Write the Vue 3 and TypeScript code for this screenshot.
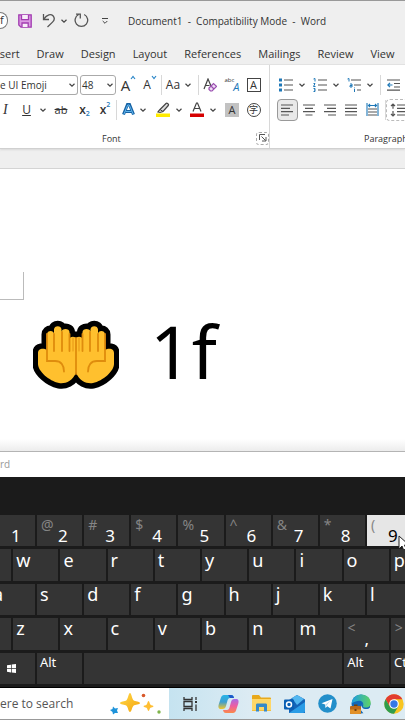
<script setup lang="ts">
interface Key {
  main: string
  alt?: string
  kind?: 'digit' | 'letter' | 'word' | 'win' | 'space'
  active?: boolean
}

const tabs: string[] = ['nsert', 'Draw', 'Design', 'Layout', 'References', 'Mailings', 'Review', 'View']

const symbols = ['', '@', '#', '$', '%', '^', '&', '*', '(']
const letters = (text: string): Key[] => text.split('').map((main) => ({ main, kind: 'letter' }))

const rows: { name: string; keys: Key[] }[] = [
  {
    name: 'inner',
    keys: symbols.map((alt, i) => ({ main: String(i + 1), alt, kind: 'digit', active: i === 8 })),
  },
  { name: 'outer', keys: letters(' wertyuiop') },
  { name: 'inner', keys: letters('asdfghjkl') },
  {
    name: 'outer',
    keys: [...letters(' zxcvbnm'), { main: ',', alt: '<', kind: 'digit' }, { main: '', alt: '>', kind: 'digit' }],
  },
  {
    name: 'bottom',
    keys: [
      { main: '', kind: 'win' },
      { main: 'Alt', kind: 'word' },
      { main: '', kind: 'space' },
      { main: 'Alt', kind: 'word' },
      { main: 'Ctrl', kind: 'word' },
    ],
  },
]
</script>

<template>
  <div class="page">
    <svg class="defs" aria-hidden="true">
      <symbol id="caret" viewBox="0 0 8 8"><path d="M1.5 2.8 4 5.2 6.5 2.8" fill="none" stroke="#444" stroke-width="1.2" /></symbol>
    </svg>

    <header class="titlebar">
      <span class="pill">f</span>
      <button class="icon save" aria-label="Save">
        <svg width="14" height="14" viewBox="0 0 14 14" fill="none" stroke="#a13bb0" stroke-width="1.3">
          <path d="M.8.8h12.4v12.4H3L.8 11z" fill="#dc9be3" /><path d="M3.5 1v4.6h7V1M4 13V9h6.2v4" fill="#f8edf9" />
        </svg>
      </button>
      <button class="icon undo" aria-label="Undo">
        <svg width="14" height="15" viewBox="0 0 14 15" fill="none" stroke="#555" stroke-width="1.3">
          <path d="M1.5 1v5.5H7M1.8 6.2C5 1 9 .7 11 2.8c2 2.200 1.300 4.500-.5 6.300L5.500 14" />
        </svg>
      </button>
      <svg class="small" width="8" height="8"><use href="#caret" /></svg>
      <button class="icon redo" aria-label="Redo">
        <svg width="15" height="15" viewBox="0 0 15 15" fill="none" stroke="#555" stroke-width="1.3">
          <path d="M10.200 1.500A6.300 6.300 0 1 1 4.600 1.500M2 1.200h4.300v4.300" />
        </svg>
      </button>
      <button class="icon more" aria-label="Customize toolbar">
        <svg width="8" height="8" viewBox="0 0 8 8" fill="none" stroke="#444" stroke-width="1"><path d="M1 1.500h6M1.700 4 4 6.300 6.300 4" /></svg>
      </button>
      <h1>Document1&nbsp; -&nbsp; Compatibility Mode&nbsp; -&nbsp; Word</h1>
    </header>

    <nav class="tabs">
      <a v-for="tab in tabs" :key="tab" href="#">{{ tab }}</a>
    </nav>

    <section class="ribbon">
      <div class="group font-group">
        <div class="tools row-a">
          <button class="combo family">e UI Emoji<svg width="8" height="8"><use href="#caret" /></svg></button>
          <button class="combo size">48<svg width="8" height="8"><use href="#caret" /></svg></button>
          <button class="tool glyph grow" aria-label="Grow font">A<svg width="6" height="5" viewBox="0 0 6 5"><path d="M1 4 3 1.500 5 4" fill="none" stroke="#2a86c8" stroke-width="1.200" /></svg></button>
          <button class="tool glyph shrink" aria-label="Shrink font">A<svg width="6" height="5" viewBox="0 0 6 5"><path d="M1 1 3 3.500 5 1" fill="none" stroke="#2a86c8" stroke-width="1.200" /></svg></button>
          <i class="rule"></i>
          <button class="tool glyph shrink">Aa</button>
          <svg width="8" height="8"><use href="#caret" /></svg>
          <i class="rule"></i>
          <button class="tool" aria-label="Clear formatting">
            <svg width="14" height="14" viewBox="0 0 14 14" fill="none" stroke="#444" stroke-width="1.200">
              <path d="M1 11 5 1l3 7M2.500 7.500h4" />
              <path d="m6 10 4.500-4.500 3 2.800L9 13H7.500L6 11.500zM8 8l3 3" fill="#f0dcf5" stroke="#9a4fb0" />
            </svg>
          </button>
          <button class="tool abc" aria-label="Phonetic guide"><small>abc</small><em>A</em></button>
          <button class="tool" aria-label="Character border"><span class="boxed">A</span></button>
        </div>
        <div class="tools row-b">
          <button class="tool italic">I</button>
          <button class="tool underline">U</button>
          <svg width="8" height="8"><use href="#caret" /></svg>
          <button class="tool strike">ab</button>
          <button class="tool script">x<sub>2</sub></button>
          <button class="tool script">x<sup>2</sup></button>
          <i class="rule"></i>
          <button class="tool" aria-label="Text effects">
            <svg width="13" height="13" viewBox="0 0 13 13"><path d="M1.500 11.500 5.500 1.500h2l4 10M3.500 8.500h6" fill="none" stroke="#1763a5" stroke-width="3" /><path d="M1.800 11.500 5.700 2h1.600l4 9.500M3.500 8.500h6" fill="none" stroke="#62b5ec" stroke-width="1" /></svg>
          </button>
          <svg width="8" height="8"><use href="#caret" /></svg>
          <button class="tool" aria-label="Highlight">
            <svg width="14" height="15" viewBox="0 0 14 15"><path d="M0 11.500h14V15H0z" fill="#ffeb00" /><path d="m4 7.500 6-6c1-1 3.200.8 2.300 2L7 9.500 4 10.500 2 10z" fill="#ddd" stroke="#444" stroke-width="1.200" /><path d="m4 7.500 3 2" stroke="#444" /></svg>
          </button>
          <svg width="8" height="8"><use href="#caret" /></svg>
          <button class="tool" aria-label="Font color">
            <svg width="14" height="15" viewBox="0 0 14 15"><path d="M0 11.500h14V15H0z" fill="#d60000" /><path d="M3 9.500 6.500 1h1L11 9.500M4.300 6.500h5.400" fill="none" stroke="#444" stroke-width="1.200" /></svg>
          </button>
          <svg width="8" height="8"><use href="#caret" /></svg>
          <button class="tool" aria-label="Character shading"><span class="shaded">A</span></button>
          <button class="tool" aria-label="Enclose characters"><span class="circled">字</span></button>
        </div>
        <div class="caption">
          <span>Font</span>
          <button class="launcher" aria-label="Font settings">
            <svg width="8" height="8" viewBox="0 0 8 8" fill="none" stroke="#555"><path d="M.500 6V.500H6M2.500 2.500l4 4M7 3v4H3" /></svg>
          </button>
        </div>
      </div>

      <div class="group para-group">
        <div class="tools row-c">
          <button class="tool" aria-label="Bullets">
            <svg width="14" height="14" viewBox="0 0 14 14"><path d="M0 .500h3v3H0zM0 5.500h3v3H0zM0 10.500h3v3H0z" fill="#1e78b8" /><path d="M5 2h9M5 7h9M5 12h9" stroke="#555" stroke-width="1.200" /></svg>
          </button>
          <svg width="8" height="8"><use href="#caret" /></svg>
          <button class="tool" aria-label="Numbering">
            <svg width="14" height="14" viewBox="0 0 14 14"><path d="M.500 1 2 .500v3M.500 5.500H2L.500 8.500h2M.500 10.500H2v3H.500M1 12h1" fill="none" stroke="#1e78b8" /><path d="M5 2h9M5 7h9M5 12h9" stroke="#555" stroke-width="1.200" /></svg>
          </button>
          <svg width="8" height="8"><use href="#caret" /></svg>
          <button class="tool" aria-label="Multilevel list">
            <svg width="14" height="14" viewBox="0 0 14 14"><path d="M.500 1 2 .500v3M3 6h2v3H3V7.500h2M7.500 11v3M7.500 9.500v.800" fill="none" stroke="#1e78b8" /><path d="M4 2h10M7 7h7M10 12h4" stroke="#555" stroke-width="1.200" /></svg>
          </button>
          <svg width="8" height="8"><use href="#caret" /></svg>
          <i class="rule"></i>
          <button class="tool" aria-label="Decrease indent">
            <svg width="13" height="12" viewBox="0 0 13 12"><path d="M0 1h13M7 4.500h6M7 8h6M0 11.200h13" stroke="#555" stroke-width="1.200" /><path d="M5.500 6H.800M3 3.800.800 6 3 8.200" fill="none" stroke="#1e78b8" stroke-width="1.200" /></svg>
          </button>
        </div>
        <div class="tools row-d">
          <button class="tool pressed" aria-label="Align left">
            <svg width="12" height="12" viewBox="0 0 12 12"><path d="M0 1h12M0 4.300h9M0 7.700h12M0 11h8" stroke="#555" stroke-width="1.200" /></svg>
          </button>
          <button class="tool" aria-label="Center">
            <svg width="12" height="12" viewBox="0 0 12 12"><path d="M0 1h12M2 4.300h8M0 7.700h12M2.500 11h7" stroke="#555" stroke-width="1.200" /></svg>
          </button>
          <button class="tool" aria-label="Align right">
            <svg width="12" height="12" viewBox="0 0 12 12"><path d="M0 1h12M3 4.300h9M0 7.700h12M4 11h8" stroke="#555" stroke-width="1.200" /></svg>
          </button>
          <button class="tool" aria-label="Justify">
            <svg width="12" height="12" viewBox="0 0 12 12"><path d="M0 1h12M0 4.300h12M0 7.700h12M0 11h12" stroke="#555" stroke-width="1.200" /></svg>
          </button>
          <button class="tool" aria-label="Distribute">
            <svg width="13" height="13" viewBox="0 0 13 13"><path d="M1 0v13M12 0v13M2.500 2.500h8M4 1 2.500 2.500 4 4M9 1l1.500 1.500L9 4" fill="none" stroke="#1e78b8" stroke-width="1.100" /><path d="M2 6h9M2 9h9M2 12h9" stroke="#555" stroke-width="1.200" /></svg>
          </button>
          <i class="rule"></i>
          <button class="tool dashed" aria-label="Line spacing">
            <svg width="15" height="14" viewBox="0 0 15 14" fill="none" stroke="#555" stroke-width="1.200"><path d="M3 .800v5M1 3l2-2 2 2M3 8v5M1 11l2 2 2-2M7 2h8M7 5.300h8M7 8.700h8M7 12h8" /></svg>
          </button>
        </div>
        <div class="caption"><span>Paragraph</span></div>
      </div>
    </section>

    <main class="desk">
      <article class="sheet">
        <div class="corner"></div>
        <p class="line">
          <svg width="86" height="70" viewBox="0 0 86 70" role="img" aria-label="Palms up together">
            <defs>
              <path id="palm" d="M5 33c0-5 6-5 9-3V14.500c0-4.500 7-4.500 7-.500V9.500c0-4.500 7.500-4.500 7.500 0V12c0-4 8-4 8 0v7c.500-3 6.500-3 6.500 0v33c-3 10-12 12-17 11C16 61 5 51 5 44z" />
              <path id="creases" d="M14 14v27h8c6 0 9 4 9 10.500M21 14v17M29 12v19M36.500 14v17" />
            </defs>
            <g stroke="#000" stroke-width="11" stroke-linejoin="round">
              <use href="#palm" />
              <use href="#palm" transform="translate(86) scale(-1 1)" />
            </g>
            <g fill="#ffc02e">
              <use href="#palm" />
              <use href="#palm" transform="translate(86) scale(-1 1)" />
            </g>
            <g fill="none" stroke="#df8c0d" stroke-width="1.800" stroke-linecap="round">
              <use href="#creases" />
              <use href="#creases" transform="translate(86) scale(-1 1)" />
              <path d="M43 18v36" />
              <path d="M40 18v13M46 18v13" stroke-width=".800" />
            </g>
          </svg>
          <span>1f</span>
        </p>
      </article>
    </main>

    <section class="osk">
      <div class="osk-title">rd</div>
      <div class="keys">
        <div v-for="(row, r) in rows" :key="r" class="key-row" :class="row.name">
          <button v-for="(key, k) in row.keys" :key="k" class="key" :class="[key.kind, { active: key.active }]">
            <span v-if="key.alt" class="alt">{{ key.alt }}</span>
            <span class="main">{{ key.main }}</span>
            <svg v-if="key.kind === 'win'" width="9" height="9" viewBox="0 0 9 9"><path d="M0 1.300 4 .700v3.500H0zM4.700.600 9 0v4.200H4.700zM0 4.900h4v3.500l-4-.600zM4.700 4.900H9V9l-4.300-.600z" fill="#fff" /></svg>
            <svg v-if="key.active" class="cursor" width="12" height="18" viewBox="0 0 12 18"><path d="M1 1v13l3-3 2 5 2.500-1-2-5H11z" fill="#fff" stroke="#222" /></svg>
          </button>
        </div>
      </div>
    </section>

    <footer class="taskbar">
      <label class="search">
        <input type="text" placeholder="ere to search" aria-label="Search" />
        <svg width="52" height="24" viewBox="0 0 52 24">
          <defs><linearGradient id="gold" x2="1" y2="1"><stop stop-color="#ffd84a" /><stop offset="1" stop-color="#f5a50c" /></linearGradient></defs>
          <path d="M20 1c1.500 0 2 6 3.500 7.200C25 9.500 30 9.500 30 11s-5 1.500-6.500 2.700C22 15 21.500 20 20 20s-2-5-3.500-6.300C15 12.500 10 12.500 10 11s5-1.500 6.500-2.800C18 7 18.500 1 20 1z" fill="url(#gold)" />
          <path d="M38.500 9c1 0 1 3 2 3.700.700.800 3 .500 3 1.600s-2.300.900-3 1.500c-1 .700-1 3.200-2 3.200s-1-2.500-2-3.200c-.700-.600-3-.400-3-1.500s2.300-.800 3-1.600c1-.700 1-3.700 2-3.700z" fill="#ffbe32" />
          <path d="m3 14.500 2 2 3-.500-1 2.500 1 2.500H5l-2 1.500-.500-2.500L0 18l2.500-1z" fill="#1e93da" />
          <circle cx="33.500" cy="3.500" r="1.800" fill="#d8582a" /><circle cx="49" cy="20" r="1.700" fill="#7fb44a" />
        </svg>
      </label>
      <a class="view" href="#" aria-label="Task view">
        <svg width="15" height="14" viewBox="0 0 15 14" fill="none" stroke="#333" stroke-width="1.300"><path d="M1 0v2.500h8V0M1 4.500h8v5H1zM1 14v-2.500h8V14M13 0v3M13 7.500V14" /><path d="M12 4h2v2h-2z" fill="#333" stroke="none" /></svg>
      </a>
      <a href="#" aria-label="Copilot">
        <svg width="21" height="20" viewBox="0 0 21 20">
          <defs>
            <linearGradient id="cpa" x2="0" y2="1"><stop stop-color="#28b5e8" /><stop offset=".5" stop-color="#3e9fd0" /><stop offset="1" stop-color="#f4c629" /></linearGradient>
            <linearGradient id="cpb" x2="0" y2="1"><stop stop-color="#a56be8" /><stop offset=".5" stop-color="#ee5da0" /><stop offset="1" stop-color="#fa8a4a" /></linearGradient>
          </defs>
          <path d="M6 1h7c2 0 2.500 1 3 3H12c-1.500 0-2 1-2.500 2.500L8 12c-.500 2-1.500 3-3.500 3H3C.500 15 0 13 .700 10.500L3 3.500C3.500 2 4.500 1 6 1z" fill="url(#cpa)" />
          <path d="M15 19H8c-2 0-2.500-1-3-3h4c1.500 0 2-1 2.500-2.500L13 8c.500-2 1.500-3 3.500-3H18c2.500 0 3 2 2.300 4.500L18 16.500c-.500 1.500-1.500 2.500-3 2.500z" fill="url(#cpb)" />
          <path d="M10 1h3c2 0 2.500 1 3 3h-4z" fill="#1d58c9" />
        </svg>
      </a>
      <a href="#" aria-label="File Explorer">
        <svg width="19" height="17" viewBox="0 0 19 17"><path d="M0 1c0-.500.500-1 1-1h6l2 2.500h9c.500 0 1 .500 1 1V16H0z" fill="#e8a91c" /><path d="M0 4h19v11.500H0z" fill="#ffd767" /><path d="M4 16.500V10c0-1 .500-1.500 1.500-1.500h8c1 0 1.500.500 1.500 1.500v6.500h-3V12H7v4.500z" fill="#3689c9" /></svg>
      </a>
      <a href="#" aria-label="Outlook">
        <svg width="21" height="18" viewBox="0 0 21 18"><path d="m5 5 8-5 8 4.500V18H5z" fill="#1464b8" /><path d="m8 3 5-3 7 4-7 6z" fill="#53b7f0" /><path d="m5 18 16-11v9c0 1-1 2-2 2z" fill="#2a9ce6" /><rect y="4.500" width="10" height="10" rx="1" fill="#0a5fb4" /><circle cx="5" cy="9.500" r="2.500" fill="none" stroke="#fff" stroke-width="1.500" /></svg>
      </a>
      <a href="#" aria-label="Telegram">
        <svg width="19" height="19" viewBox="0 0 19 19"><circle cx="9.500" cy="9.500" r="9.300" fill="#238fca" /><path d="M3.500 9.300 14.500 5l-2 9.500-3.200-2.300-1.800 1.700-.400-3.300z" fill="#fff" /><path d="m7.300 10.800 5-4.100-3.800 4.900-1 2z" fill="#b5d8ec" /></svg>
      </a>
      <a href="#" aria-label="Edge">
        <svg width="21" height="20" viewBox="0 0 21 20"><defs><linearGradient id="eg"><stop stop-color="#1d9de2" /><stop offset="1" stop-color="#5fd363" /></linearGradient></defs><circle cx="11" cy="10" r="9.500" fill="#1268b8" /><path d="M1.500 9.500C2.500 3.500 6.500.500 11 .500c6 0 9.700 4 9.700 8.500 0 3.500-3 5-6 4.500-1.700-.300-2-1-1.500-2C14 7 9 4.500 1.500 9.500z" fill="url(#eg)" /><path d="M12.500 9.500c-1.500 2-1 5 2.500 5.500 2 .300 4-.300 5.500-1.500l.500 2.500-3 4h-4l-4-5z" fill="#d8eaf2" /><rect y="12" width="11" height="8" rx="1" fill="#b9681b" /><path d="M0 15.500h11V18c0 1-.500 2-1.500 2h-8C.500 20 0 19 0 18z" fill="#e29128" /><path d="M4 12v-1.500h3.500V12M4.500 15h2v2h-2z" fill="#704010" /></svg>
      </a>
      <a href="#" aria-label="Chrome">
        <svg width="20" height="20" viewBox="0 0 20 20"><circle cx="10" cy="10" r="9.700" fill="#f8c522" /><path d="M1.600 5.150A9.700 9.700 0 0 1 18.400 5.150H10L5.800 12.400z" fill="#e23c30" /><path d="M1.600 5.150A9.700 9.700 0 0 0 10 19.700l4.200-7.300H5.800z" fill="#2f9d4c" /><circle cx="10" cy="10" r="4.800" fill="#fff" /><circle cx="10" cy="10" r="3.700" fill="#3478e5" /></svg>
      </a>
    </footer>
  </div>
</template>

<style>
body {
  margin: 0;
  background: #efefef;
}
</style>

<style scoped>
.page {
  display: flex;
  flex-direction: column;
  min-height: 100vh;
  overflow: hidden;
  font-family: "Open Sans", "Noto Sans", "Noto Sans CJK SC", sans-serif;
  color: #333;
  background: #efefef;
}
.page * {
  box-sizing: border-box;
}
.defs {
  position: absolute;
  width: 0;
  height: 0;
}
svg {
  display: block;
  flex: none;
}
button {
  display: flex;
  align-items: center;
  justify-content: center;
  padding: 0;
  border: 0;
  background: none;
  color: inherit;
  font: inherit;
}
a {
  color: inherit;
  text-decoration: none;
}

.titlebar {
  display: flex;
  align-items: center;
  height: 40px;
  border-top: 1px solid #999;
  white-space: nowrap;
}
.pill {
  width: 8px;
  height: 17px;
  border: 1px solid #777;
  border-left: 0;
  border-radius: 0 8px 8px 0;
  background: #fff;
  font-size: 11px;
  line-height: 14px;
}
.save { margin-left: 10px; }
.undo { margin-left: 10px; }
.small { margin-left: 4px; }
.redo { margin-left: 6px; }
.more { margin-left: 12px; }
h1 {
  margin: 0 0 0 19px;
  font-size: 10px;
  font-weight: 400;
}

.tabs {
  display: flex;
  align-items: center;
  gap: 17px;
  height: 25px;
  margin-left: -7px;
  padding-top: 2px;
  border-bottom: 1px solid #e2e2e2;
  font-size: 11px;
}

.ribbon {
  display: flex;
  height: 84px;
  overflow: hidden;
  background: #fff;
  border-bottom: 1px solid #d0d0d0;
  box-shadow: 0 1px 2px #d8d8d8;
}
.group {
  display: flex;
  flex-direction: column;
  flex: none;
  padding-top: 8px;
}
.font-group {
  width: 270px;
  border-right: 1px solid #d8d8d8;
}
.tools {
  display: grid;
  align-items: center;
  justify-items: center;
  height: 24px;
  margin-bottom: 2px;
}
.tools > svg {
  justify-self: start;
}
.row-a { grid-template-columns: 80px 37px 23px 20px 2px 22px 8px 7px 22px 22px 21px; }
.row-b { grid-template-columns: 14px 25px 8px 28px 19px 22px 1px 22px 11px 25px 9px 25px 12px 22px 21px; }
.row-c { grid-template-columns: 24px 10px 24px 10px 24px 10px 5px 24px; }
.row-d { grid-template-columns: 22px 21px 21px 22px 21px 3px 22px; }
.rule {
  justify-self: end;
  width: 1px;
  height: 20px;
  background: #d8d8d8;
}
.para-group {
  padding-left: 4px;
}
.row-d {
  padding-left: 2px;
}
.combo {
  justify-self: start;
  justify-content: space-between;
  height: 20px;
  padding-right: 1px;
  border: 1px solid #aaa;
  border-radius: 3px;
  font-size: 10px;
}
.family {
  width: 78px;
  border-left: 0;
  border-radius: 0 3px 3px 0;
}
.size { width: 36px; padding-left: 1px; }
.glyph {
  align-items: flex-start;
  line-height: 20px;
}
.grow { font-size: 15px; }
.shrink { font-size: 12px; }
.abc {
  align-items: flex-start;
  height: 18px;
}
.abc small {
  font-size: 6px;
  line-height: 8px;
}
.abc em {
  align-self: flex-end;
  margin-left: -1px;
  color: #1e78b8;
  font-size: 11px;
  line-height: 14px;
}
.boxed,
.shaded {
  width: 14px;
  height: 14px;
  font-size: 11px;
  line-height: 13px;
  text-align: center;
}
.boxed { border: 1px solid #444; line-height: 12px; }
.shaded { background: #c2c2c2; }
.circled {
  width: 14px;
  height: 14px;
  border: 1px solid #444;
  border-radius: 50%;
  font-size: 9px;
  line-height: 11px;
}
.italic {
  justify-self: start;
  padding-left: 3px;
  font-family: "Liberation Serif", serif;
  font-size: 14px;
  font-style: italic;
}
.underline {
  font-size: 12px;
  text-decoration: underline;
}
.strike {
  font-size: 11px;
  text-decoration: line-through;
}
.script {
  font-size: 12px;
  font-weight: 600;
}
.script sub,
.script sup {
  color: #1e78b8;
  font-size: 7px;
  line-height: 8px;
}
.script sub { align-self: flex-end; }
.script sup { align-self: flex-start; }
.pressed {
  width: 21px;
  height: 22px;
  border: 1px solid #999;
  border-radius: 4px;
  background: #e9e9e9;
}
.dashed {
  width: 22px;
  height: 22px;
  border: 1px dashed #bbb;
  border-radius: 4px;
}
.caption {
  display: flex;
  align-items: center;
  height: 20px;
  margin-top: 5px;
  font-size: 9px;
}
.font-group .caption {
  justify-content: space-between;
  padding-left: 102px;
}
.para-group .caption { padding-left: 90px; }
.launcher {
  width: 13px;
  height: 13px;
  border: 1px dashed #aaa;
  border-radius: 3px;
}

.desk {
  display: flex;
  flex: 1;
  padding-top: 19px;
}
.sheet {
  flex: 1;
  border-top: 1px solid #d4d4d4;
  background: linear-gradient(#fff calc(100% - 12px), #ececec);
}
.corner {
  width: 24px;
  height: 28px;
  margin-top: 103px;
  border: solid #bbb;
  border-width: 0 1px 1px 0;
}
.line {
  display: flex;
  align-items: center;
  gap: 31px;
  height: 110px;
  margin: 0;
  padding-left: 33px;
  color: #000;
  font-family: "Noto Sans", sans-serif;
  font-size: 73px;
  line-height: 102px;
}
.line span {
  align-self: flex-start;
}

.osk {
  border-top: 1px solid #b4b4b4;
  background: #1b1b1b;
}
.osk-title {
  height: 25px;
  background: #fff;
  color: #999;
  font-size: 10px;
  line-height: 25px;
}
.keys {
  display: grid;
  grid-template-rows: repeat(5, 1fr);
  gap: 3px;
  height: 211px;
  padding: 38px 0 3px;
  border-bottom: 1px solid #000;
  overflow: hidden;
}
.key-row {
  display: grid;
  grid-auto-columns: 1fr;
  grid-auto-flow: column;
  gap: 2px;
}
.inner { margin: 0 -7px 0 -10px; }
.outer { margin: 0 -31px 0 -34px; }
.bottom {
  grid-template-columns: 45fr 45fr 259fr 45fr 45fr;
  margin: 0 -31px 0 -10px;
}
.key {
  position: relative;
  display: block;
  min-width: 0;
  padding-left: 3px;
  background: #343434;
  color: #fff;
  font-family: "Noto Sans", sans-serif;
  font-size: 18px;
  line-height: 21px;
  text-align: left;
}
.key .main {
  display: block;
  height: 31px;
}
.digit .main {
  padding: 9px 0 0 18px;
  font-size: 17px;
  line-height: 24px;
}
.alt {
  position: absolute;
  top: 0;
  left: 4px;
  color: #858585;
  font-size: 14px;
  line-height: 19px;
}
.key.word {
  font-size: 13px;
  line-height: 19px;
}
.win {
  display: flex;
  padding-left: 17px;
  justify-content: flex-start;
}
.active {
  background: #e6e6e6;
  color: #000;
}
.cursor {
  position: absolute;
  top: 20px;
  left: 31px;
}

.taskbar {
  display: flex;
  align-items: center;
  height: 32px;
  border-bottom: 1px solid #999;
  background: linear-gradient(90deg, #c5e3f0 169px, #dcebf3 250px);
}
.search {
  display: flex;
  flex: none;
  align-items: center;
  width: 169px;
  height: 31px;
  background: #fff;
}
.search input {
  width: 110px;
  padding: 0;
  border: 0;
  background: none;
  font-family: inherit;
  font-size: 12px;
}
.search input::placeholder {
  color: #555;
  opacity: 1;
}
.taskbar a {
  display: flex;
  flex: none;
  align-items: center;
  justify-content: center;
  width: 33px;
}
.taskbar .view { width: 43px; }
</style>
